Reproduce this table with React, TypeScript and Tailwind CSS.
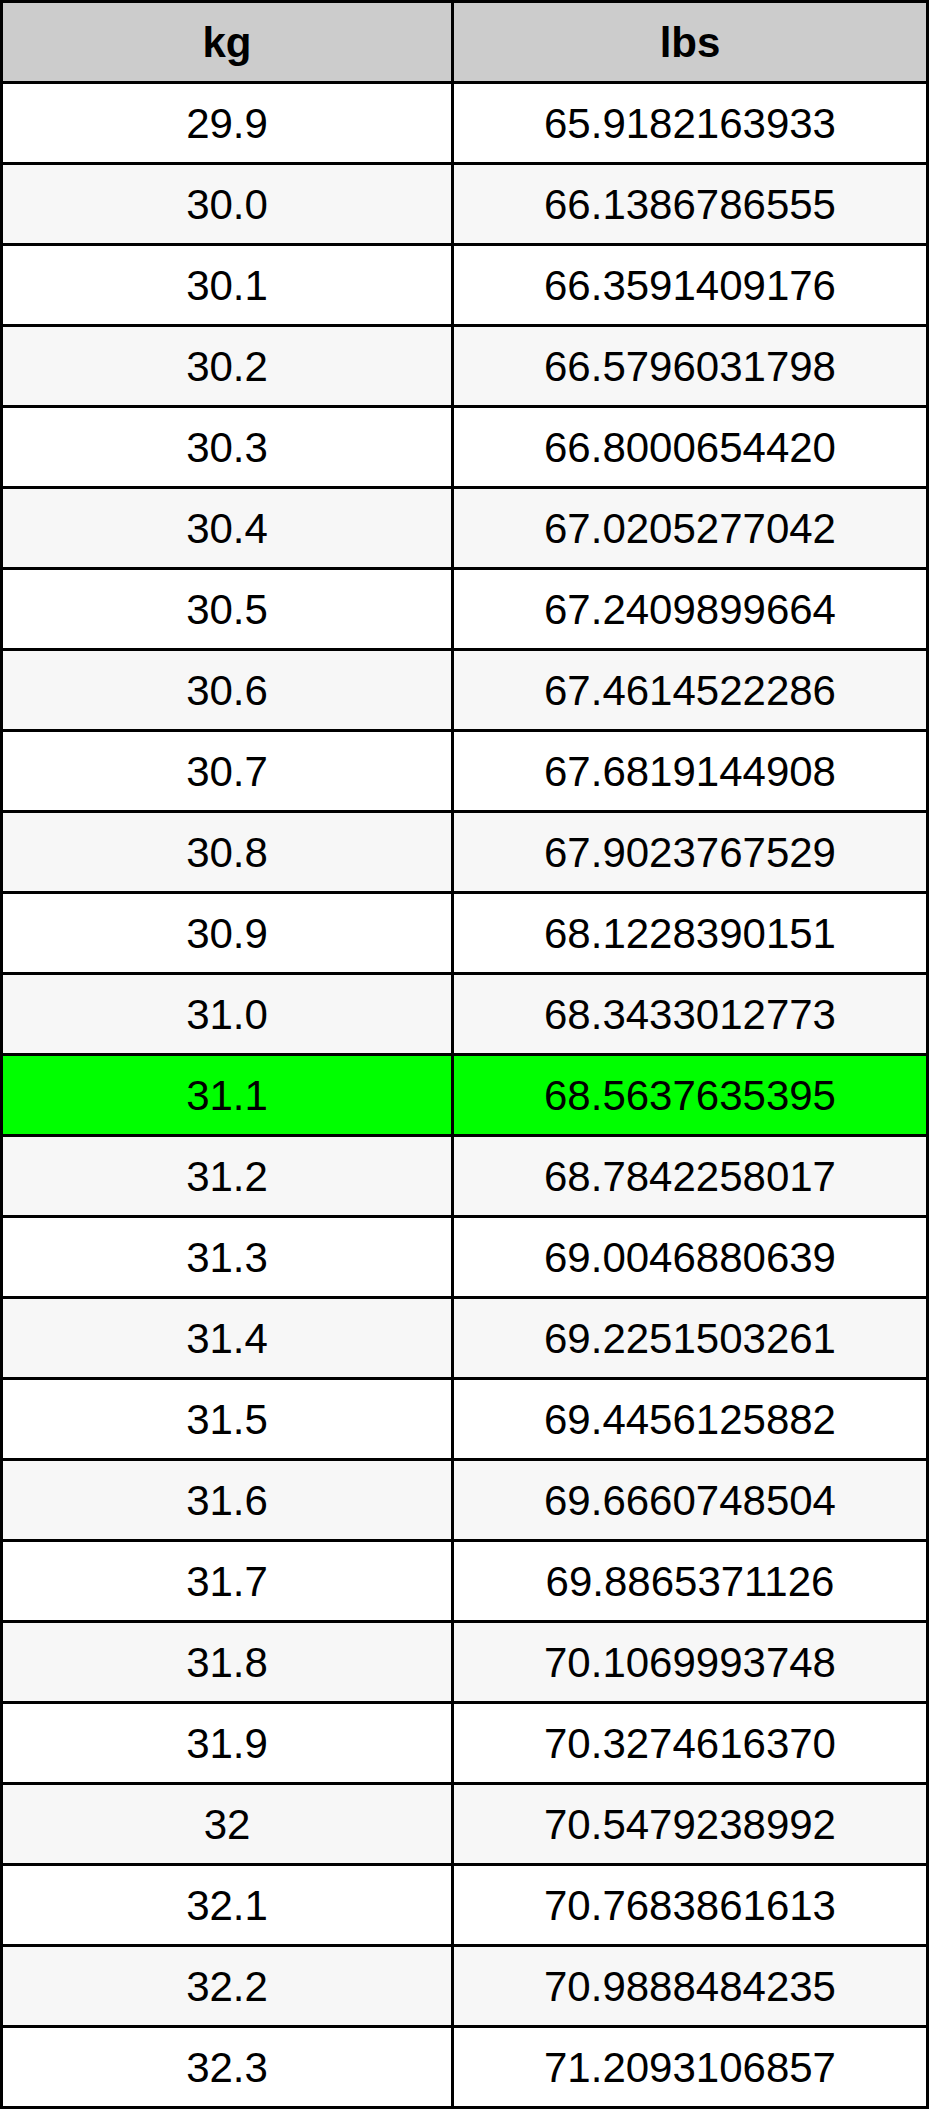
import React from "react";

const rows: [string, string][] = [
  ["29.9", "65.9182163933"],
  ["30.0", "66.1386786555"],
  ["30.1", "66.3591409176"],
  ["30.2", "66.5796031798"],
  ["30.3", "66.8000654420"],
  ["30.4", "67.0205277042"],
  ["30.5", "67.2409899664"],
  ["30.6", "67.4614522286"],
  ["30.7", "67.6819144908"],
  ["30.8", "67.9023767529"],
  ["30.9", "68.1228390151"],
  ["31.0", "68.3433012773"],
  ["31.1", "68.5637635395"],
  ["31.2", "68.7842258017"],
  ["31.3", "69.0046880639"],
  ["31.4", "69.2251503261"],
  ["31.5", "69.4456125882"],
  ["31.6", "69.6660748504"],
  ["31.7", "69.8865371126"],
  ["31.8", "70.1069993748"],
  ["31.9", "70.3274616370"],
  ["32", "70.5479238992"],
  ["32.1", "70.7683861613"],
  ["32.2", "70.9888484235"],
  ["32.3", "71.2093106857"],
];

export default function App() {
  return (
    <div className="w-[930px] bg-white" style={{ fontFamily: '"Liberation Sans", Arial, sans-serif' }}>
      <div className="w-[929px] border-l-[3px] border-t-[3px] border-black text-black">
        <div className="flex h-[81px] border-b-[3px] border-black bg-[#cccccc] text-[42px] font-bold">
          <div className="flex w-[451px] items-center justify-center border-r-[3px] border-black">kg</div>
          <div className="flex w-[475px] items-center justify-center border-r-[3px] border-black">lbs</div>
        </div>
        {rows.map(([kg, lbs], i) => {
          const bg = kg === "31.1" ? "bg-[#00ff00]" : i % 2 === 0 ? "bg-white" : "bg-[#f7f7f7]";
          return (
            <div key={kg} className={`flex h-[81px] border-b-[3px] border-black text-[42px] ${bg}`}>
              <div className="flex w-[451px] items-center justify-center border-r-[3px] border-black">{kg}</div>
              <div className="flex w-[475px] items-center justify-center border-r-[3px] border-black">{lbs}</div>
            </div>
          );
        })}
      </div>
    </div>
  );
}
